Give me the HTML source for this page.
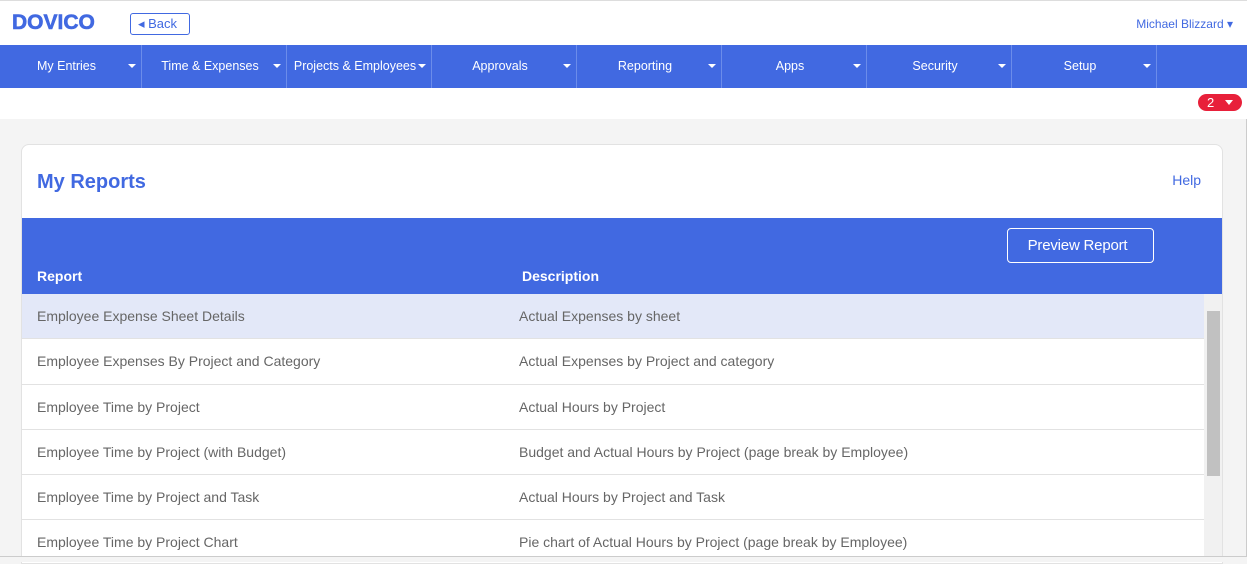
<!DOCTYPE html>
<html><head><style>
*{box-sizing:border-box;margin:0;padding:0}
body{width:1247px;height:562px;overflow:hidden;background:#f4f4f4;font-family:"Liberation Sans",Arial,sans-serif;position:relative;border-right:1px solid #ccc}
.top{position:absolute;left:0;top:0;width:1247px;height:45px;background:#fff;border-top:1px solid #ddd}
.logo{position:absolute;left:12px;top:10px;font-weight:900;font-size:21px;color:#4169e1;-webkit-text-stroke:0.6px #4169e1}
.back{position:absolute;left:130px;top:12px;width:60px;height:22px;border:1px solid #4169e1;border-radius:3px;color:#4169e1;font-size:13px;line-height:20px;padding-left:7px}
.user{position:absolute;right:14px;top:16px;color:#4169e1;font-size:12px}
.nav{position:absolute;left:0;top:45px;width:1247px;height:43px;background:#4169e1}
.ni{position:absolute;top:0;height:43px;border-right:1px solid #6b8cea;color:#fff;font-size:12.5px;line-height:42px;text-align:center}
.ni:after{content:"";position:absolute;right:5px;top:19px;border:4px solid transparent;border-top:4px solid #fff;border-bottom:0}
.strip{position:absolute;left:0;top:88px;width:1247px;height:31px;background:#fff}
.badge{position:absolute;left:1198px;top:94px;width:44px;height:17px;background:#e8203a;border-radius:9px;color:#fff;font-size:13px;line-height:17px;padding-left:9px}
.badge:after{content:"";position:absolute;right:9px;top:6px;border:4px solid transparent;border-top:5px solid #fff;border-bottom:0}
.card{position:absolute;left:21px;top:144px;width:1202px;height:420px;background:#fff;border:1px solid #e2e2e2;border-radius:8px 8px 0 0;overflow:hidden}
.card h1{position:absolute;left:15px;top:26px;font-size:20px;color:#4169e1;font-weight:bold}
.help{position:absolute;right:21px;top:27px;color:#4169e1;font-size:14px}
.th{position:absolute;left:0;top:73px;width:1202px;height:76px;background:#4169e1;color:#fff;font-weight:bold;font-size:14px}
.pr{position:absolute;left:985px;top:10px;width:147px;height:35px;border:1px solid #fff;border-radius:4px;font-weight:normal;font-size:15px;text-align:center;line-height:33px;letter-spacing:-0.2px;padding-right:6px}
.row{position:absolute;left:0;width:1182px;height:45px;border-bottom:1px solid #e2e2e2;color:#666;font-size:14px;line-height:44px}
.row span{position:absolute;left:15px}.row b{position:absolute;left:497px;font-weight:normal}
.sb{position:absolute;left:1182px;top:149px;width:18px;height:262px;background:#f1f1f1}
.thumb{position:absolute;left:3px;top:17px;width:13px;height:165px;background:#c1c1c1}
</style></head><body>
<div class="top"><div class="logo">DOVICO</div><div class="back">◂ Back</div><div class="user">Michael Blizzard ▾</div></div>
<div class="nav">
<div class="ni" style="left:0;width:142px;padding-right:8px">My Entries</div>
<div class="ni" style="left:142px;width:145px;padding-right:8px">Time &amp; Expenses</div>
<div class="ni" style="left:287px;width:145px;padding-right:8px">Projects &amp; Employees</div>
<div class="ni" style="left:432px;width:145px;padding-right:8px">Approvals</div>
<div class="ni" style="left:577px;width:145px;padding-right:8px">Reporting</div>
<div class="ni" style="left:722px;width:145px;padding-right:8px">Apps</div>
<div class="ni" style="left:867px;width:145px;padding-right:8px">Security</div>
<div class="ni" style="left:1012px;width:145px;padding-right:8px">Setup</div>
</div>
<div class="strip"><div class="badge" style="top:6px">2</div></div>
<div class="card">
<h1>My Reports</h1><div class="help">Help</div>
<div class="th"><div class="pr">Preview Report</div><span style="position:absolute;left:15px;top:50px">Report</span><span style="position:absolute;left:500px;top:50px">Description</span></div>
<div class="row" style="top:149px;background:#e3e8f8"><span>Employee Expense Sheet Details</span><b>Actual Expenses by sheet</b></div>
<div class="row" style="top:194px;height:46px"><span>Employee Expenses By Project and Category</span><b>Actual Expenses by Project and category</b></div>
<div class="row" style="top:240px"><span>Employee Time by Project</span><b>Actual Hours by Project</b></div>
<div class="row" style="top:285px"><span>Employee Time by Project (with Budget)</span><b>Budget and Actual Hours by Project (page break by Employee)</b></div>
<div class="row" style="top:330px"><span>Employee Time by Project and Task</span><b>Actual Hours by Project and Task</b></div>
<div class="row" style="top:375px;border:0"><span>Employee Time by Project Chart</span><b>Pie chart of Actual Hours by Project (page break by Employee)</b></div>
<div class="sb"><div class="thumb"></div></div>
</div>
<div style="position:absolute;left:0;top:556px;width:1247px;height:6px;background:#f4f4f4;border-top:1px solid #ccc"></div>
</body></html>
